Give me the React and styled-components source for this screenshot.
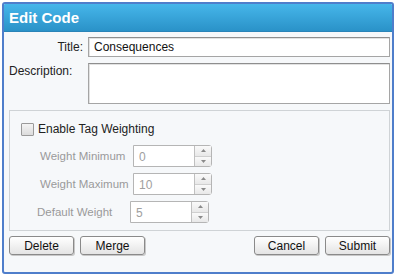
import styled, { createGlobalStyle } from "styled-components";

const GlobalStyle = createGlobalStyle`
  body {
    margin: 0;
    background: #ffffff;
    font-family: "Liberation Sans", Arial, sans-serif;
  }
`;

const App = () => {
  return (
    <>
      <GlobalStyle />
      <Window>
        <TitleBar>Edit Code</TitleBar>
        <Body>
          <FieldRow>
            <Label>Title:</Label>
            <TextInput defaultValue="Consequences" />
          </FieldRow>
          <FieldRow top>
            <Label left>Description:</Label>
            <TextArea />
          </FieldRow>

          <Group>
            <CheckRow>
              <CheckBox />
              <span>Enable Tag Weighting</span>
            </CheckRow>
            <SpinRow>
              <DimLabel>Weight Minimum</DimLabel>
              <Spinner value="0" />
            </SpinRow>
            <SpinRow>
              <DimLabel>Weight Maximum</DimLabel>
              <Spinner value="10" />
            </SpinRow>
            <SpinRow shift={-3}>
              <DimLabel>Default Weight</DimLabel>
              <Spinner value="5" />
            </SpinRow>
          </Group>

          <ButtonBar>
            <ButtonGroup>
              <Button>Delete</Button>
              <Button>Merge</Button>
            </ButtonGroup>
            <ButtonGroup>
              <Button>Cancel</Button>
              <Button>Submit</Button>
            </ButtonGroup>
          </ButtonBar>
        </Body>
      </Window>
    </>
  );
};

const Spinner = ({ value }) => (
  <SpinBox>
    <SpinValue>{value}</SpinValue>
    <SpinButtons>
      <SpinArrow>
        <svg width="5" height="3" viewBox="0 0 5 3">
          <path d="M0 3 L2.5 0 L5 3 Z" fill="#8a8a8a" />
        </svg>
      </SpinArrow>
      <SpinArrow>
        <svg width="5" height="3" viewBox="0 0 5 3">
          <path d="M0 0 L2.5 3 L5 0 Z" fill="#8a8a8a" />
        </svg>
      </SpinArrow>
    </SpinButtons>
  </SpinBox>
);

const Window = styled.div`
  margin: 2px 0 0 2px;
  width: 388px;
  height: 268px;
  border: 2px solid #4f7ecb;
  border-radius: 3px;
  background: #f6f8fa;
  display: flex;
  flex-direction: column;
  overflow: hidden;
`;

const TitleBar = styled.div`
  height: 27px;
  padding-left: 5px;
  display: flex;
  align-items: center;
  background: linear-gradient(#46b6ea, #2a92c8);
  border-bottom: 1px solid #2a84b8;
  color: #ffffff;
  font-weight: bold;
  font-size: 15px;
`;

const Body = styled.div`
  padding: 5px 2px 0 5px;
  display: flex;
  flex-direction: column;
  font-size: 12px;
  color: #222;
`;

const FieldRow = styled.div`
  display: flex;
  align-items: ${(p) => (p.top ? "flex-start" : "center")};
  gap: 5px;
  margin-bottom: 6px;
`;

const Label = styled.div`
  width: 74px;
  flex-shrink: 0;
  text-align: ${(p) => (p.left ? "left" : "right")};
  padding-top: ${(p) => (p.left ? "1px" : "0")};
`;

const TextInput = styled.input`
  flex: 1;
  height: 20px;
  box-sizing: border-box;
  border: 1px solid #a5a5a5;
  border-top-color: #8e8e8e;
  box-shadow: inset 1px 1px 0 #e2e2e2;
  background: #fff;
  padding: 0 5px;
  font: 12px "Liberation Sans", Arial, sans-serif;
  color: #111;
  outline: none;
`;

const TextArea = styled.textarea`
  flex: 1;
  height: 41px;
  box-sizing: border-box;
  border: 1px solid #a5a5a5;
  border-top-color: #8e8e8e;
  box-shadow: inset 1px 1px 0 #e2e2e2;
  background: #fff;
  resize: none;
  outline: none;
  margin: 0;
`;

const Group = styled.div`
  height: 121px;
  box-sizing: border-box;
  border: 1px solid #cfd3d6;
  padding: 11px 0 0 11px;
  display: flex;
  flex-direction: column;
  gap: 6px;
`;

const CheckRow = styled.div`
  display: flex;
  align-items: center;
  gap: 4px;
  height: 14px;
  margin-bottom: 3px;
`;

const CheckBox = styled.span`
  width: 11px;
  height: 11px;
  border: 1px solid #9a9a9a;
  border-radius: 1px;
  background: linear-gradient(#f4f4f4, #dcdcdc);
`;

const SpinRow = styled.div`
  display: grid;
  grid-template-columns: 93px auto;
  align-items: center;
  padding-left: 19px;
  margin-left: ${(p) => p.shift || 0}px;
  height: 22px;
`;

const DimLabel = styled.div`
  color: #9a9a9a;
  font-size: 11.5px;
`;

const SpinBox = styled.div`
  display: flex;
  width: 79px;
  height: 22px;
  box-sizing: border-box;
  border: 1px solid #b5b5b5;
  border-radius: 0 3px 3px 0;
  background: #fff;
`;

const SpinValue = styled.div`
  flex: 1;
  display: flex;
  align-items: center;
  padding: 2px 0 0 5px;
  color: #a0a0a0;
  border-right: 1px solid #c0c0c0;
`;

const SpinButtons = styled.div`
  width: 16px;
  display: flex;
  flex-direction: column;
`;

const SpinArrow = styled.div`
  flex: 1;
  display: flex;
  align-items: center;
  justify-content: center;
  background: linear-gradient(#fafafa, #e8e8e8);
  & + & {
    border-top: 1px solid #cfcfcf;
  }
`;

const ButtonBar = styled.div`
  display: flex;
  justify-content: space-between;
  margin-top: 5px;
`;

const ButtonGroup = styled.div`
  display: flex;
  gap: 6px;
`;

const Button = styled.button`
  width: 65px;
  height: 19px;
  box-sizing: border-box;
  border: 1px solid #8a8a8a;
  border-radius: 3px;
  background: linear-gradient(#ffffff, #e4e4e4);
  box-shadow: 1px 1px 0 #c8c8c8;
  font: 12px "Liberation Sans", Arial, sans-serif;
  color: #111;
  padding: 0;
`;

export default App;
